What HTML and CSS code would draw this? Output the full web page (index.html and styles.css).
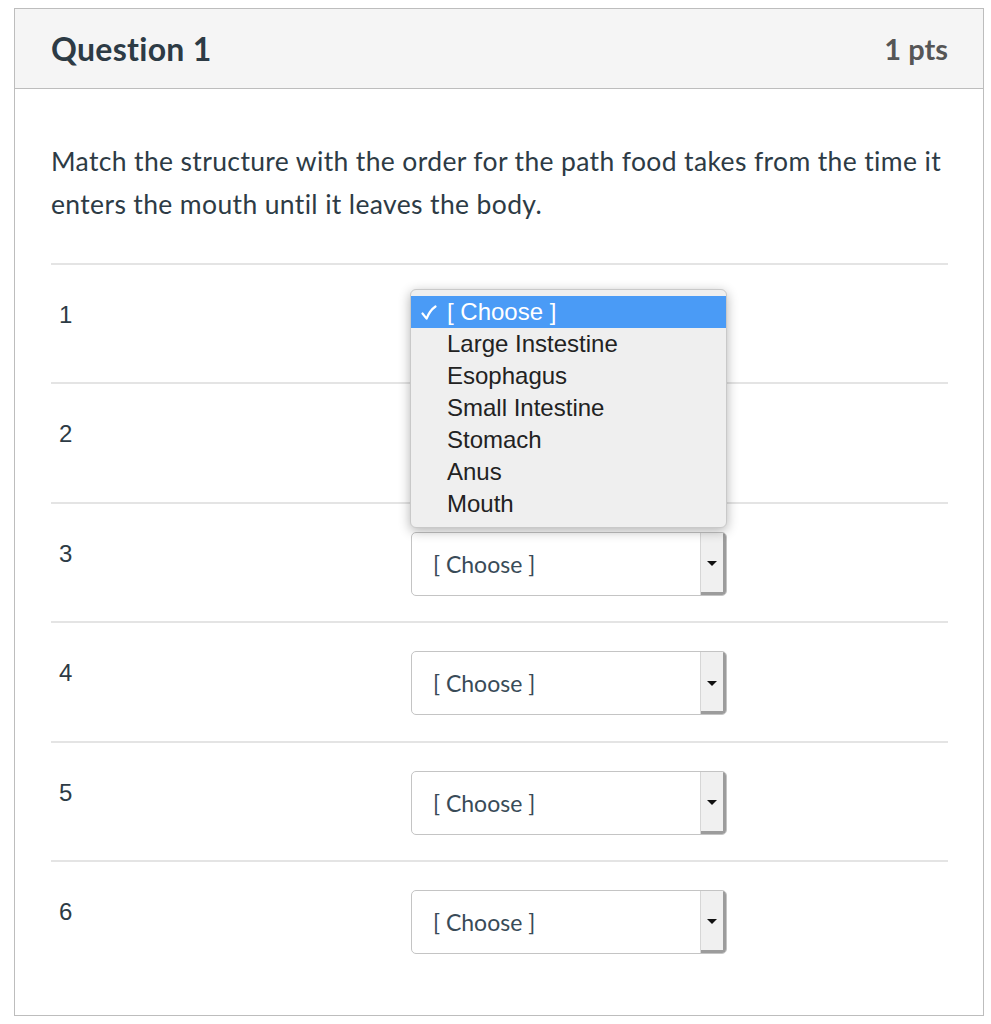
FILE: index.html
```html
<!DOCTYPE html>
<html lang="en">
<head>
<meta charset="utf-8">
<title>Question 1</title>
<link rel="stylesheet" href="styles.css">
</head>
<body>
<div class="card">
  <div class="header">
    <h2 class="title">Question 1</h2>
    <span class="pts">1 pts</span>
  </div>
  <div class="content">
    <p class="question">Match the structure with the order for the path food takes from the time it enters the mouth until it leaves the body.</p>
    <div class="rows">
      <div class="row">
        <div class="label">1</div>
        <div class="select-wrap">
          <div class="select"><span class="sel-text">[ Choose ]</span><span class="btn"><span class="tri"></span></span></div>
          <ul class="menu">
            <li class="item selected"><svg class="check" width="16" height="16" viewBox="0 0 16 16"><path d="M1.5 8.5 L5.6 13.6 C7.5 8.6 10.5 4.2 14.5 1.5" fill="none" stroke="#fff" stroke-width="2.2" stroke-linecap="round" stroke-linejoin="round"/></svg>[ Choose ]</li>
            <li class="item">Large Instestine</li>
            <li class="item">Esophagus</li>
            <li class="item">Small Intestine</li>
            <li class="item">Stomach</li>
            <li class="item">Anus</li>
            <li class="item">Mouth</li>
          </ul>
        </div>
      </div>
      <div class="row">
        <div class="label">2</div>
        <div class="select-wrap">
          <div class="select"><span class="sel-text">[ Choose ]</span><span class="btn"><span class="tri"></span></span></div>
        </div>
      </div>
      <div class="row">
        <div class="label">3</div>
        <div class="select-wrap">
          <div class="select"><span class="sel-text">[ Choose ]</span><span class="btn"><span class="tri"></span></span></div>
        </div>
      </div>
      <div class="row">
        <div class="label">4</div>
        <div class="select-wrap">
          <div class="select"><span class="sel-text">[ Choose ]</span><span class="btn"><span class="tri"></span></span></div>
        </div>
      </div>
      <div class="row">
        <div class="label">5</div>
        <div class="select-wrap">
          <div class="select"><span class="sel-text">[ Choose ]</span><span class="btn"><span class="tri"></span></span></div>
        </div>
      </div>
      <div class="row">
        <div class="label">6</div>
        <div class="select-wrap">
          <div class="select"><span class="sel-text">[ Choose ]</span><span class="btn"><span class="tri"></span></span></div>
        </div>
      </div>
    </div>
  </div>
</div>
</body>
</html>
```
FILE: styles.css
```css
* { box-sizing: border-box; }
html, body { background: #ffffff; }
body {
  margin: 8px 7px 0 14px;
  font-family: Lato, "Open Sans", sans-serif;
  color: #2d3b45;
}
.card {
  width: 970px;
  border: 1px solid #bdbdbd;
}
.header {
  height: 80px;
  background: #f5f5f5;
  border-bottom: 1px solid #bdbdbd;
  display: flex;
  align-items: center;
  justify-content: space-between;
  padding: 0 35px 1px 36px;
}
.title {
  margin: 0;
  font-size: 32px;
  font-weight: 700;
  letter-spacing: 0.3px;
  color: #2d3b45;
}
.pts {
  font-size: 29px;
  font-weight: 700;
  color: #565656;
}
.content {
  padding: 51px 35px 36px 36px;
}
.question {
  margin: 0 0 37px;
  font-size: 26.5px;
  line-height: 43px;
  letter-spacing: 0.36px;
  font-variant-ligatures: none;
  color: #2d3b45;
}
.row {
  display: flex;
  border-top: 2px solid #e4e4e4;
  padding: 28px 0 25.4px;
}
.label {
  width: 360px;
  padding: 10px 0 0 8px;
  font-family: "Liberation Sans", Arial, sans-serif;
  font-size: 24px;
  line-height: 24px;
  color: #2d3b45;
}
.select-wrap {
  position: relative;
  width: 316px;
}
.select {
  height: 64px;
  border: 1px solid #c4c4c4;
  border-radius: 5px;
  display: flex;
  align-items: center;
  background: #fff;
  overflow: hidden;
}
.sel-text {
  flex: 1;
  padding-left: 21px;
  font-size: 23px;
  color: #394b58;
}
.btn {
  width: 26px;
  align-self: stretch;
  background: #f0f0f0;
  border-left: 1px solid #d6d6d6;
  box-shadow: inset -3px -3px 0 #9c9c9c;
  display: flex;
  align-items: center;
  justify-content: center;
  padding-right: 3px;
}
.tri {
  width: 0;
  height: 0;
  border-left: 5px solid transparent;
  border-right: 5px solid transparent;
  border-top: 5px solid #111;
}
.menu {
  position: absolute;
  top: -4px;
  left: -1px;
  width: 317px;
  margin: 0;
  padding: 6px 0 7px;
  list-style: none;
  background: #efefef;
  border: 1px solid #c9c9c9;
  border-radius: 6px;
  box-shadow: 0 3px 12px rgba(0, 0, 0, 0.3);
  font-family: "Liberation Sans", Arial, sans-serif;
  font-size: 24px;
  color: #222;
  z-index: 5;
}
.item {
  position: relative;
  height: 32px;
  line-height: 32px;
  padding-left: 36px;
}
.item.selected {
  background: #4a9bf6;
  color: #fff;
}
.check {
  position: absolute;
  left: 10px;
  top: 9px;
}
```
